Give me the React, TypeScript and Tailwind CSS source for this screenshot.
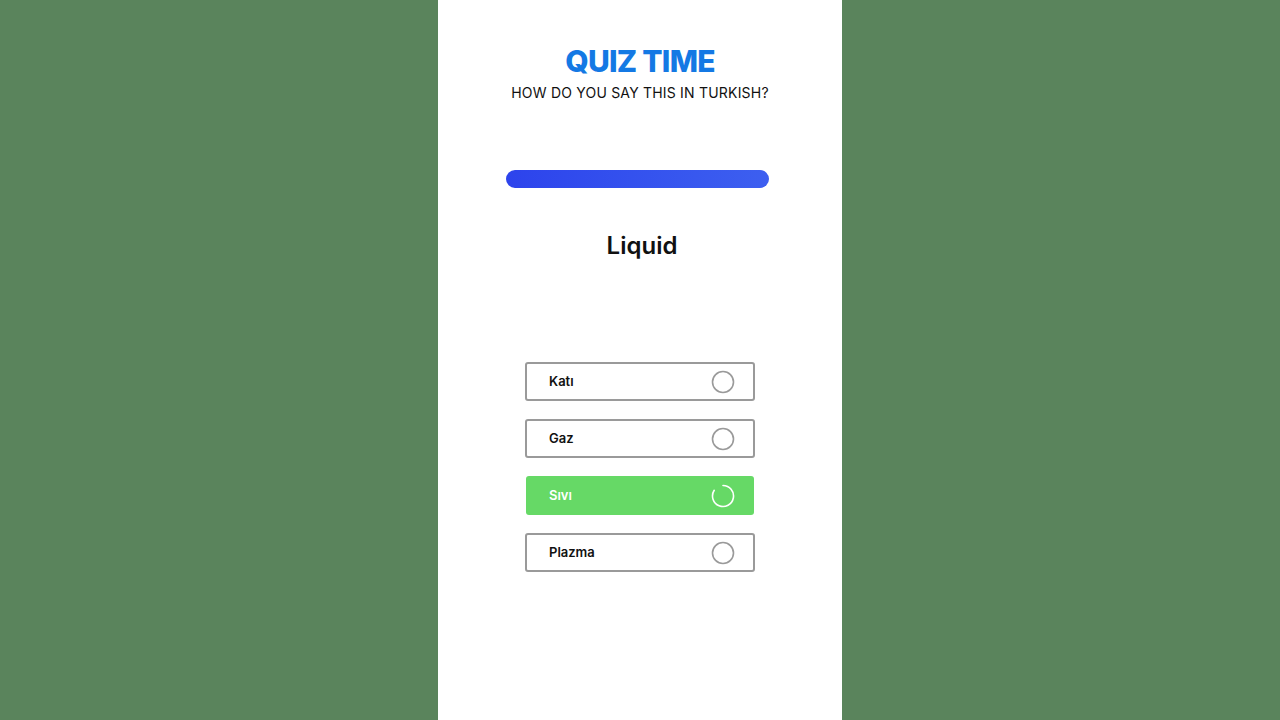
import React from 'react';

const options = [
  { label: 'Katı', selected: false },
  { label: 'Gaz', selected: false },
  { label: 'Sıvı', selected: true },
  { label: 'Plazma', selected: false },
];

function Circle({ selected }: { selected: boolean }) {
  if (selected) {
    return (
      <svg width="24" height="24" viewBox="0 0 24 24" fill="none">
        <path d="M12 1.5 A10.5 10.5 0 1 1 3.2 6.3" stroke="#ffffff" strokeWidth="1.6" strokeLinecap="round" />
      </svg>
    );
  }
  return (
    <svg width="24" height="24" viewBox="0 0 24 24" fill="none">
      <circle cx="12" cy="12" r="10.5" stroke="#9a9a9a" strokeWidth="1.6" />
    </svg>
  );
}

export default function App() {
  return (
    <div className="min-h-screen w-full bg-[#5a845c] flex justify-center" style={{ fontFamily: 'Inter, "Open Sans", sans-serif' }}>
      <div className="w-[404px] h-[720px] bg-white flex flex-col items-center">
        {/* Header */}
        <h1 className="mt-[43px] text-[30px] leading-[36px] font-extrabold text-[#1479e4] tracking-tight">QUIZ TIME</h1>
        <p className="mt-[4px] text-[14px] leading-[20px] text-[#111] tracking-[0.2px]">HOW DO YOU SAY THIS IN TURKISH?</p>

        {/* Progress */}
        <div className="mt-[67px] w-[263px] h-[18px] rounded-full bg-gradient-to-r from-[#2d43ec] to-[#3d5ff0] -translate-x-[3px]" />

        {/* Word */}
        <h2 className="mt-[42px] text-[24px] leading-[32px] font-semibold text-[#111] translate-x-[2px]">Liquid</h2>

        {/* Options */}
        <div className="mt-[100px] flex flex-col items-center gap-[18px]">
          {options.map((o) => (
            <div
              key={o.label}
              className={
                o.selected
                  ? 'w-[228px] h-[39px] rounded-[3px] bg-[#66d966] flex items-center justify-between pl-[23px] pr-[19px]'
                  : 'w-[230px] h-[39px] rounded-[3px] border-2 border-[#9a9a9a] bg-white flex items-center justify-between pl-[22px] pr-[18px]'
              }
            >
              <span className={o.selected ? 'text-[13px] font-semibold text-white' : 'text-[13px] font-semibold text-[#111]'}>{o.label}</span>
              <Circle selected={o.selected} />
            </div>
          ))}
        </div>
      </div>
    </div>
  );
}
